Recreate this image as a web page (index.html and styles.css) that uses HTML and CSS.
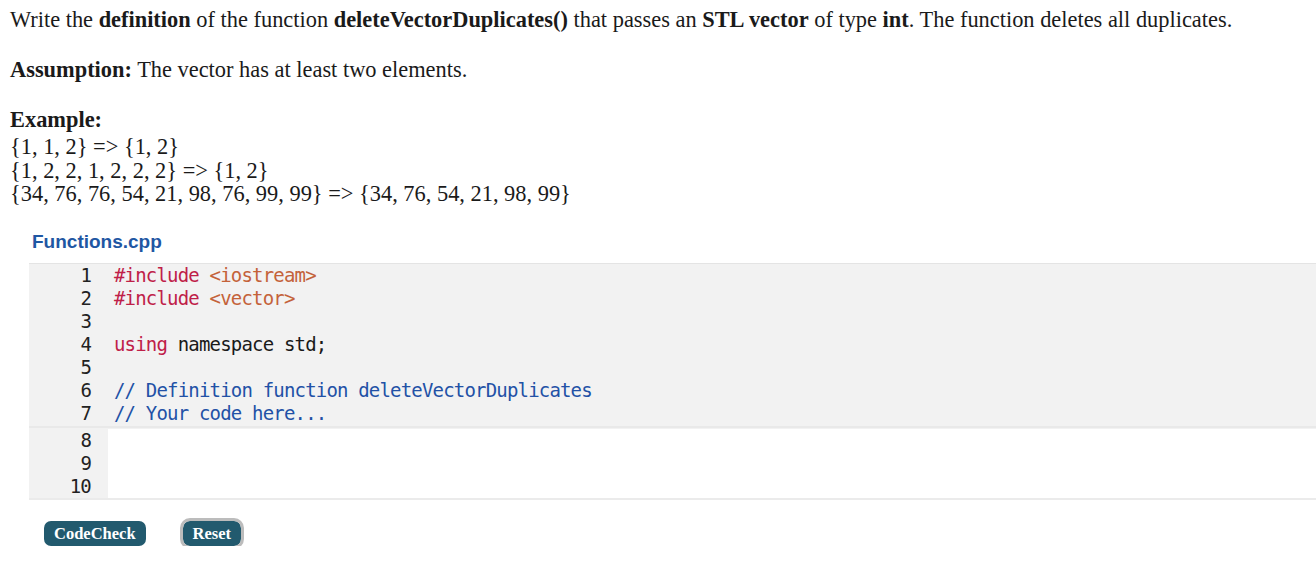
FILE: index.html
```html
<!DOCTYPE html>
<html>
<head>
<meta charset="utf-8">
<link rel="stylesheet" href="styles.css">
</head>
<body>
<div class="page">
  <p class="para first">Write the <b>definition</b> of the function <b>deleteVectorDuplicates()</b> that passes an <b>STL vector</b> of type <b>int</b>. The function deletes all duplicates.</p>
  <p class="para"><b>Assumption:</b> The vector has at least two elements.</p>
  <div class="example">
    <div class="ex-title"><b>Example:</b></div>
    <div class="ex-line">{1, 1, 2} =&gt; {1, 2}</div>
    <div class="ex-line">{1, 2, 2, 1, 2, 2, 2} =&gt; {1, 2}</div>
    <div class="ex-line">{34, 76, 76, 54, 21, 98, 76, 99, 99} =&gt; {34, 76, 54, 21, 98, 99}</div>
  </div>

  <div class="file">
    <div class="file-name">Functions.cpp</div>
    <div class="editor">
      <div class="ro">
        <div class="gutter">
          <div>1</div><div>2</div><div>3</div><div>4</div><div>5</div><div>6</div><div>7</div>
        </div>
        <div class="code">
          <div class="ln"><span class="kw">#include</span> <span class="str">&lt;iostream&gt;</span></div>
          <div class="ln"><span class="kw">#include</span> <span class="str">&lt;vector&gt;</span></div>
          <div class="ln">&nbsp;</div>
          <div class="ln"><span class="kw">using</span> namespace std;</div>
          <div class="ln">&nbsp;</div>
          <div class="ln"><span class="cm">// Definition function deleteVectorDuplicates</span></div>
          <div class="ln"><span class="cm">// Your code here...</span></div>
        </div>
      </div>
      <div class="rw">
        <div class="gutter">
          <div>8</div><div>9</div><div>10</div>
        </div>
        <div class="code edit">
          <div class="ln">&nbsp;</div><div class="ln">&nbsp;</div><div class="ln">&nbsp;</div>
        </div>
      </div>
    </div>
    <div class="buttons">
      <button class="btn">CodeCheck</button>
      <button class="btn focus">Reset</button>
    </div>
  </div>
</div>
</body>
</html>
```

FILE: styles.css
```css
html, body {
  margin: 0;
  padding: 0;
  background: #ffffff;
}

.page {
  font-family: "Liberation Serif", "Times New Roman", serif;
  font-size: 22.4px;
  line-height: 24px;
  color: #1a1a1a;
  padding: 8px 0 0 10px;
}

.para {
  margin: 0 0 26px 0;
}

.example {
  margin: 0;
}

.ex-title {
  line-height: 24px;
  margin-bottom: 3px;
}

.ex-line {
  line-height: 23.5px;
}

.file {
  padding-left: 19px;
  margin-top: 25px;
}

.file-name {
  font-family: "Liberation Sans", Arial, sans-serif;
  font-weight: bold;
  font-size: 19px;
  line-height: 22px;
  color: #1f57a3;
  padding-left: 3px;
  margin-bottom: 10px;
}

.editor {
  font-family: "DejaVu Sans Mono", monospace;
  font-size: 19px;
  letter-spacing: -0.82px;
  line-height: 23px;
  color: #1a1a1a;
  border-top: 1px solid #e4e4e4;
  border-bottom: 2px solid #ebebeb;
  background: #f2f2f2;
}

.ro {
  display: flex;
  background: #f2f2f2;
  border-bottom: 2px solid #e9e9e9;
  padding-bottom: 1px;
}

.rw {
  display: flex;
  padding-top: 1px;
  background: #f2f2f2;
}

.gutter {
  width: 62px;
  padding-right: 17px;
  text-align: right;
  color: #222;
  background: #f2f2f2;
  flex: none;
}

.code {
  flex: 1;
  padding-left: 6px;
}

.ln {
  white-space: pre;
}

.code.edit {
  background: #ffffff;
}

.kw { color: #bf2048; }
.str { color: #c4623a; }
.cm { color: #2251a6; }

.buttons {
  display: flex;
  gap: 37px;
  align-items: center;
  padding-left: 15px;
  margin-top: 21px;
}

.btn {
  font-family: "Liberation Serif", "Times New Roman", serif;
  font-weight: bold;
  font-size: 16.5px;
  line-height: 25px;
  height: 25px;
  padding: 0 10px;
  color: #ffffff;
  background: #225a6e;
  border: none;
  border-radius: 7px;
  margin: 0;
}

.btn.focus {
  outline: 3px solid #bcbcbc;
  outline-offset: 0;
}
```
